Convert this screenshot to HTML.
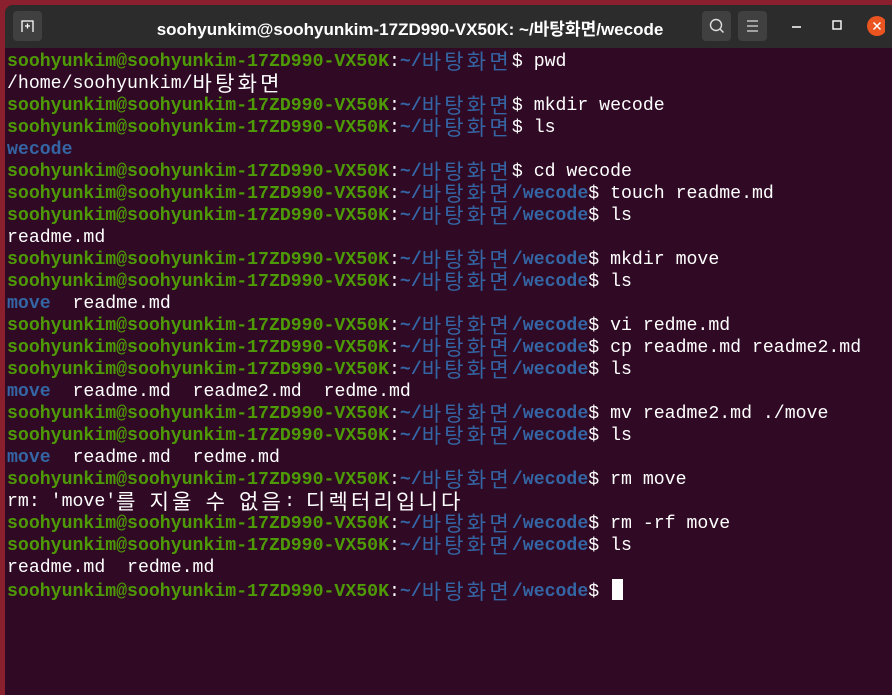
<!DOCTYPE html>
<html><head><meta charset="utf-8"><style>
*{margin:0;padding:0;box-sizing:border-box}
body{width:892px;height:686px;overflow:hidden;background:#8a1f2e;position:relative}
.win{position:absolute;left:5px;top:5px;width:895px;height:690px;background:#300a24;border-radius:8px 8px 0 0;overflow:hidden}
.tb{position:absolute;left:0;top:0;right:0;height:43px;background:#2c2c2c}
.title{position:absolute;left:0;width:810px;top:10px;text-align:center;color:#fff;font:bold 17px "Liberation Sans","Noto Sans CJK KR",sans-serif}
.btn{position:absolute;top:6px;width:29px;height:30px;background:#404040;border-radius:4px}
.term{position:absolute;left:2px;top:46px;font:18.2px/22px "Liberation Mono","Noto Sans CJK KR",monospace;color:#fff}
.term div{height:22px;line-height:22px;white-space:pre}
.g{color:#4e9a06;font-weight:bold}.b{color:#3465a4;font-weight:bold}
.k{font-family:"Noto Sans CJK KR",sans-serif;font-size:21px;font-weight:normal;letter-spacing:3.2px;line-height:0;position:relative;top:3px}
.cur{display:inline-block;width:11px;height:21px;background:#fff;vertical-align:-4px;margin-left:2px}
</style></head><body>
<div class="win">
<div class="tb">
<div class="btn" style="left:8px"><svg width="29" height="30" viewBox="0 0 29 30"><path d="M9 21V10h11v11M14.5 12.5v5M12 15h5" stroke="#fff" stroke-width="1.3" fill="none"/></svg></div>
<div class="title">soohyunkim@soohyunkim-17ZD990-VX50K: ~/바탕화면/wecode</div>
<div class="btn" style="left:697px"><svg width="29" height="30"><circle cx="14" cy="14" r="5.5" stroke="#ddd" stroke-width="1.4" fill="none"/><path d="M18 18l3.5 3.5" stroke="#ddd" stroke-width="1.5"/></svg></div>
<div class="btn" style="left:733px"><svg width="29" height="30"><path d="M9 10h11M9 15h11M9 20h11" stroke="#ddd" stroke-width="1.3"/></svg></div>
<svg style="position:absolute;left:780px;top:5px" width="100" height="30"><path d="M7 17h9" stroke="#fff" stroke-width="1.5"/><rect x="48" y="11" width="8" height="8" stroke="#fff" stroke-width="1.4" fill="none"/><circle cx="92" cy="16" r="10" fill="#e95420"/><path d="M88.5 12.5l7 7M95.5 12.5l-7 7" stroke="#fff" stroke-width="1.5"/></svg>
</div>
<div class="term"><div><span class="g">soohyunkim@soohyunkim-17ZD990-VX50K</span>:<span class="b">~/<span class="k">바탕화면</span></span>$ pwd</div><div>/home/soohyunkim/<span class="k">바탕화면</span></div><div><span class="g">soohyunkim@soohyunkim-17ZD990-VX50K</span>:<span class="b">~/<span class="k">바탕화면</span></span>$ mkdir wecode</div><div><span class="g">soohyunkim@soohyunkim-17ZD990-VX50K</span>:<span class="b">~/<span class="k">바탕화면</span></span>$ ls</div><div><span class="b">wecode</span></div><div><span class="g">soohyunkim@soohyunkim-17ZD990-VX50K</span>:<span class="b">~/<span class="k">바탕화면</span></span>$ cd wecode</div><div><span class="g">soohyunkim@soohyunkim-17ZD990-VX50K</span>:<span class="b">~/<span class="k">바탕화면</span>/wecode</span>$ touch readme.md</div><div><span class="g">soohyunkim@soohyunkim-17ZD990-VX50K</span>:<span class="b">~/<span class="k">바탕화면</span>/wecode</span>$ ls</div><div>readme.md</div><div><span class="g">soohyunkim@soohyunkim-17ZD990-VX50K</span>:<span class="b">~/<span class="k">바탕화면</span>/wecode</span>$ mkdir move</div><div><span class="g">soohyunkim@soohyunkim-17ZD990-VX50K</span>:<span class="b">~/<span class="k">바탕화면</span>/wecode</span>$ ls</div><div><span class="b">move</span>  readme.md</div><div><span class="g">soohyunkim@soohyunkim-17ZD990-VX50K</span>:<span class="b">~/<span class="k">바탕화면</span>/wecode</span>$ vi redme.md</div><div><span class="g">soohyunkim@soohyunkim-17ZD990-VX50K</span>:<span class="b">~/<span class="k">바탕화면</span>/wecode</span>$ cp readme.md readme2.md</div><div><span class="g">soohyunkim@soohyunkim-17ZD990-VX50K</span>:<span class="b">~/<span class="k">바탕화면</span>/wecode</span>$ ls</div><div><span class="b">move</span>  readme.md  readme2.md  redme.md</div><div><span class="g">soohyunkim@soohyunkim-17ZD990-VX50K</span>:<span class="b">~/<span class="k">바탕화면</span>/wecode</span>$ mv readme2.md ./move</div><div><span class="g">soohyunkim@soohyunkim-17ZD990-VX50K</span>:<span class="b">~/<span class="k">바탕화면</span>/wecode</span>$ ls</div><div><span class="b">move</span>  readme.md  redme.md</div><div><span class="g">soohyunkim@soohyunkim-17ZD990-VX50K</span>:<span class="b">~/<span class="k">바탕화면</span>/wecode</span>$ rm move</div><div>rm: 'move'<span class="k">를</span> <span class="k">지울</span> <span class="k">수</span> <span class="k">없음</span>: <span class="k">디렉터리입니다</span></div><div><span class="g">soohyunkim@soohyunkim-17ZD990-VX50K</span>:<span class="b">~/<span class="k">바탕화면</span>/wecode</span>$ rm -rf move</div><div><span class="g">soohyunkim@soohyunkim-17ZD990-VX50K</span>:<span class="b">~/<span class="k">바탕화면</span>/wecode</span>$ ls</div><div>readme.md  redme.md</div><div><span class="g">soohyunkim@soohyunkim-17ZD990-VX50K</span>:<span class="b">~/<span class="k">바탕화면</span>/wecode</span>$ <span class="cur"></span></div></div>
</div>
</body></html>
